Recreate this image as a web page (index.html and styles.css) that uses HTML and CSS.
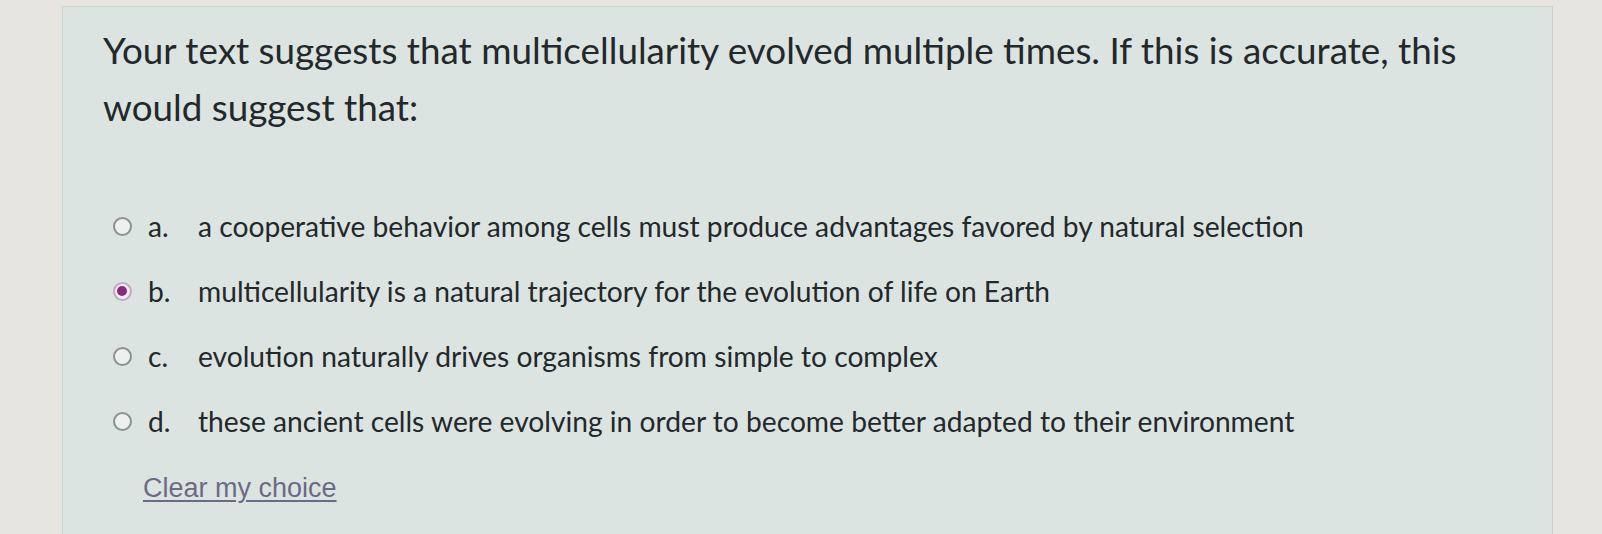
FILE: index.html
```html
<!DOCTYPE html>
<html lang="en">
<head>
<meta charset="utf-8">
<title>Question</title>
<link rel="stylesheet" href="styles.css">
</head>
<body>
<div class="page">
  <div class="panel">
    <div class="qtext">Your text suggests that multicellularity evolved multiple times. If this is accurate, this would suggest that:</div>
    <div class="answers">
      <div class="opt">
        <span class="radio"></span>
        <span class="letter">a.</span>
        <span class="atext">a cooperative behavior among cells must produce advantages favored by natural selection</span>
      </div>
      <div class="opt">
        <span class="radio checked"></span>
        <span class="letter">b.</span>
        <span class="atext">multicellularity is a natural trajectory for the evolution of life on Earth</span>
      </div>
      <div class="opt">
        <span class="radio"></span>
        <span class="letter">c.</span>
        <span class="atext">evolution naturally drives organisms from simple to complex</span>
      </div>
      <div class="opt">
        <span class="radio"></span>
        <span class="letter">d.</span>
        <span class="atext">these ancient cells were evolving in order to become better adapted to their environment</span>
      </div>
    </div>
    <a class="clear" href="#">Clear my choice</a>
  </div>
</div>
</body>
</html>
```

FILE: styles.css
```css
html, body {
  margin: 0;
  height: 100%;
}
body {
  background: #e6e5e0;
  color: #23282a;
  font-family: Lato, "Open Sans", sans-serif;
  overflow: hidden;
}
.page {
  height: 100%;
  box-sizing: border-box;
  padding: 6px 49px 0 62px;
}
.panel {
  height: 100%;
  box-sizing: border-box;
  background: #dce4e2;
  border: 1px solid #c8d2d2;
  border-bottom: none;
  padding: 15px 40px 0 40px;
}
.qtext {
  font-size: 36.8px;
  line-height: 57px;
}
.answers {
  margin-top: 70px;
  display: flex;
  flex-direction: column;
  gap: 25px;
}
.opt {
  display: flex;
  align-items: center;
  padding-left: 10px;
  font-size: 28.2px;
  line-height: 40px;
}
.radio {
  width: 19px;
  height: 19px;
  box-sizing: border-box;
  border-radius: 50%;
  border: 2px solid #8e9192;
  background: #eef0f0;
  margin-right: 16px;
  flex: none;
  position: relative;
}
.radio.checked {
  border: 2.5px solid #c3a9bd;
  background: #f4eff3;
}
.radio.checked::after {
  content: "";
  position: absolute;
  left: 2px;
  top: 2px;
  width: 10px;
  height: 10px;
  border-radius: 50%;
  background: #8b2a80;
}
.letter {
  width: 50px;
  flex: none;
}
.clear {
  display: inline-block;
  margin-top: 31px;
  margin-left: 40px;
  font-family: "Liberation Sans", Arial, sans-serif;
  font-size: 27px;
  line-height: 32px;
  color: #6d6a86;
  text-decoration: underline;
  text-underline-offset: 3px;
}
```
